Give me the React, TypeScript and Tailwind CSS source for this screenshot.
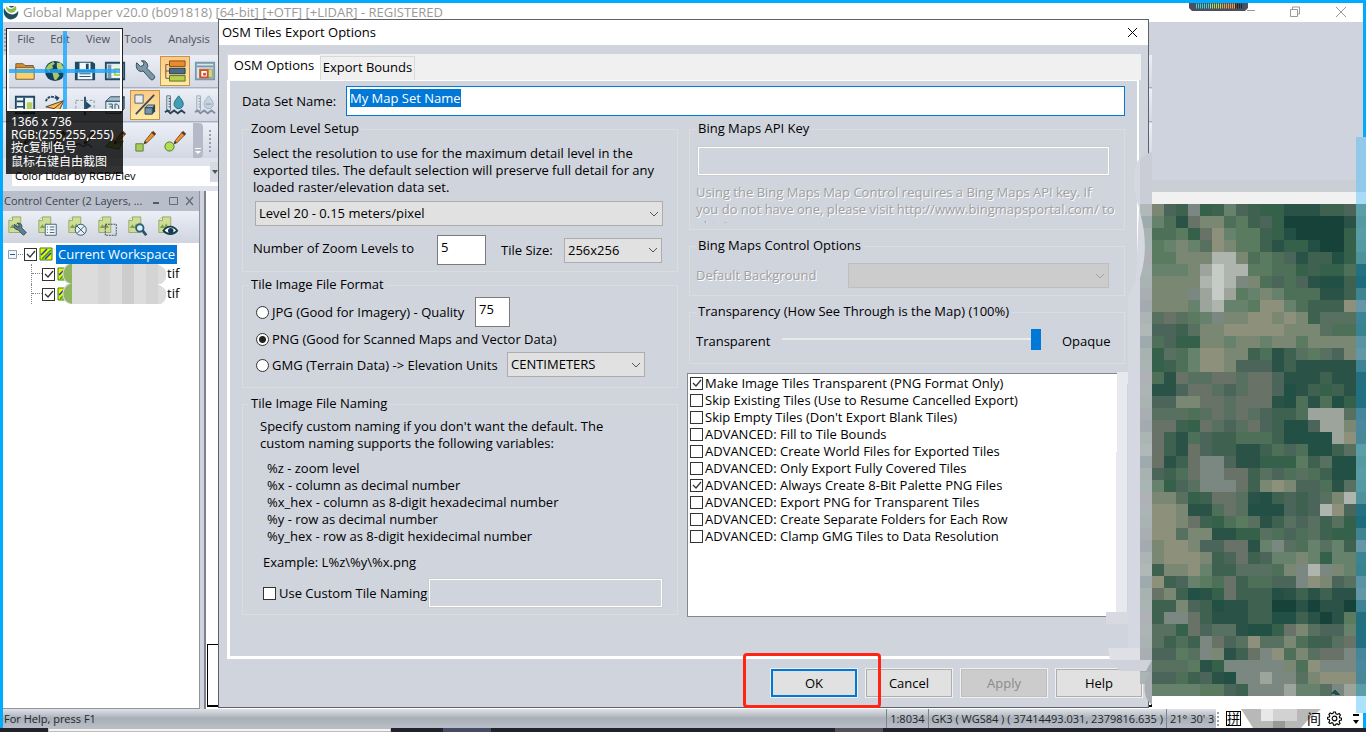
import { useEffect, useRef } from "react";
import type { ReactNode } from "react";

const NAVY = "#1f4a63";

/* ---------- Small drawings ---------- */

function Pencil() {
  return (
    <g>
      <path d="M12 12l8-10 3 3-9 9-3 1z" fill="#f0962e" stroke="#6b4a26" strokeWidth="1" />
      <path d="M19 3l2-2 3 3-2 2z" fill="#5a3b22" />
      <path d="M11 15l1-3 2 2z" fill="#3a3a3a" />
    </g>
  );
}

const toolIcons: Record<string, ReactNode> = {
  open: (
    <g>
      <path d="M2 4h8l2 2h9v5H2z" fill="#e8892b" stroke="#6b5a3a" />
      <path d="M2 8h20v13H2z" fill="#ffd06a" stroke="#6b5a3a" strokeWidth="1" />
    </g>
  ),
  globe: (
    <g>
      <circle cx="12" cy="12" r="11" fill="#12405e" />
      <path d="M5 5l5-3 2 2-3 2 1 3-4 1 1 3-2 0-3-4z" fill="#a8c860" />
      <path d="M14 3l4 0 4 6-1 5-3-3-2 1-2-4z" fill="#b8d070" />
      <path d="M9 13l6 1 2 3-4 5-2-1z" fill="#a8c860" />
    </g>
  ),
  save: (
    <g>
      <path d="M1 2h19l3 2v18H1z" fill={NAVY} />
      <path d="M6 3h12v8H6z" fill="#f4f6f9" />
      <path d="M13 4h3v6h-3z" fill={NAVY} />
      <path d="M4 13h16v8H4z" fill="#f4f6f9" />
      <path d="M6 15h12M6 18h12" stroke={NAVY} />
    </g>
  ),
  layout: (
    <g>
      <path d="M2 3h20v18H2z" fill="#e6edf3" stroke={NAVY} strokeWidth="2" />
      <path d="M4 5h4v15H4z" fill="#7d98aa" />
      <path d="M10 8h10v10H10z" fill="#b5cf5c" stroke="#fff" />
      <path d="M13 11h4v4h-4z" fill="#fff" />
    </g>
  ),
  wrench: (
    <path
      d="M3 3l4 4 3-1 1-3-3-2c4-1 7 2 7 6l-1 2 8 8c2 3-2 6-4 4l-8-9c-5 2-9-3-7-9z"
      fill="#7f96a6"
      stroke="#28445a"
      strokeWidth="1"
    />
  ),
  layers: (
    <g>
      <path d="M5 5H2v15h4M2 12h4" fill="none" stroke="#6b4a26" />
      <path d="M6 1h17v6H6z" fill="#ef8a2a" stroke="#7a4a1a" />
      <path d="M6 9h17v6H6z" fill="#4e6b85" stroke="#22384a" />
      <path d="M6 17h17v6H6z" fill="#b5cf4e" stroke="#5a6a20" />
    </g>
  ),
  view: (
    <g>
      <path d="M2 3h20v18H2z" fill="#d9e3ec" stroke="#7b98ab" strokeWidth="2" />
      <path d="M3 7h18" stroke="#7b98ab" strokeWidth="2" />
      <path d="M6 10h14v9H6z" fill="#cfd98a" stroke="#8fa050" />
      <path d="M7 11h8v8H7z" fill="#fff" stroke="#d05028" strokeWidth="2" />
      <path d="M10 14h3v3h-3z" fill="#d05028" />
    </g>
  ),
  panels: (
    <g>
      <path d="M2 3h20v18H2z" fill="#eef2f6" stroke={NAVY} strokeWidth="2" />
      <path d="M11 4v17M3 8h8M3 14h8" stroke={NAVY} strokeWidth="2" />
      <path d="M4 15h6v5H4z" fill="#fff" />
      <path d="M14 9h6v10h-6z" fill="#b5cf5c" />
    </g>
  ),
  fly: (
    <g>
      <path d="M2 8c2-6 8-6 12-3" fill="none" stroke={NAVY} strokeWidth="2" strokeDasharray="3 1" />
      <path d="M12 1l5 3-3 4z" fill={NAVY} />
      <path d="M2 14L22 7l-7 14-4-5z" fill="#f7b85a" stroke="#4a3a22" />
      <path d="M11 16L22 7" stroke="#4a3a22" />
    </g>
  ),
  flip: (
    <g>
      <path d="M2 7h20v12H2z" fill="none" stroke="#7b98ab" strokeDasharray="3 2" />
      <path d="M12 3v20" stroke={NAVY} strokeWidth="2" />
      <path d="M13 8l6 5-6 4z" fill={NAVY} />
    </g>
  ),
  cube: (
    <g>
      <path d="M2 8l5-5h15l-4 5z" fill="#a8b8c4" stroke={NAVY} />
      <path d="M18 8l4-5v13l-4 5z" fill="#5f7a8c" stroke={NAVY} />
      <path d="M2 8h16v13H2z" fill="#dfe7ed" stroke={NAVY} />
      <path d="M5 11h4v7H5M6 14h3M12 11v7h2l2-2v-3l-2-2z" fill="none" stroke={NAVY} />
    </g>
  ),
  shade: (
    <g>
      <path d="M1 1h9v9H1z" fill="#e8ecf0" stroke="#4a6070" />
      <path d="M22 1L2 22" stroke="#3b4d58" strokeWidth="2" />
      <path d="M12 15l3-3h8l-3 3z" fill="#a9bac5" stroke="#28445a" />
      <path d="M20 15l3-3v7l-3 3z" fill="#28445a" />
      <path d="M12 15h8v7h-8z" fill="#7894a6" stroke="#28445a" />
    </g>
  ),
  water: (
    <g>
      <path d="M3 2h4v16H3z" fill="#dfe7ed" stroke="#55707f" />
      <path d="M5 5h2M5 8h2M5 11h2M5 14h2" stroke="#28445a" />
      <path d="M16 2c3 4 5 6 5 9a5 5 0 0 1-10 0c0-3 2-5 5-9z" fill="#3f9fb5" stroke="#28647a" />
      <path d="M1 20l3-2 3 3 4-3 4 3 4-3 4 3" fill="none" stroke="#28445a" strokeWidth="2" />
    </g>
  ),
  waterOff: (
    <g opacity="0.5">
      <path d="M3 2h4v16H3z" fill="#dfe7ed" stroke="#55707f" />
      <path d="M5 5h2M5 8h2M5 11h2M5 14h2" stroke="#28445a" />
      <path d="M16 2c3 4 5 6 5 9a5 5 0 0 1-10 0c0-3 2-5 5-9z" fill="#a8c4d2" stroke="#55809a" />
      <path d="M13 11h6" stroke="#28445a" />
      <path d="M1 20l3-2 3 3 4-3 4 3 4-3 4 3" fill="none" stroke="#28445a" strokeWidth="2" />
    </g>
  ),
  drawPoint: (
    <g>
      <path d="M2 20l4-6 5 4" fill="none" stroke="#8fae4a" strokeWidth="2" />
      <Pencil />
    </g>
  ),
  drawLine: (
    <g>
      <path d="M2 17c4-6 6 4 10 0s6 2 8 2" fill="none" stroke="#6b8796" strokeWidth="2" />
      <Pencil />
    </g>
  ),
  drawArea: (
    <g>
      <path d="M2 18l7-8 4 4 8-2-5 9z" fill="#a5c45a" stroke="#5a7a2a" />
      <Pencil />
    </g>
  ),
  drawRect: (
    <g>
      <path d="M2 15h8v8H2z" fill="#a8cf55" stroke="#5a7a3a" />
      <Pencil />
    </g>
  ),
  drawCircle: (
    <g>
      <circle cx="6" cy="18" r="5" fill="#b2e04a" stroke="#4a6a3a" />
      <Pencil />
    </g>
  ),
};

function ToolButton({ icon, label, active = false }: { icon: string; label: string; active?: boolean }) {
  return (
    <button
      type="button"
      aria-label={label}
      className={
        active
          ? "flex h-[30px] w-[30px] shrink-0 items-center justify-center border border-[#c0954f] bg-gradient-to-b from-[#fbc985] to-[#ffeaa6]"
          : "flex h-[30px] w-[30px] shrink-0 items-center justify-center"
      }
    >
      <svg viewBox="0 0 24 24" className="h-[22px] w-[22px] shrink-0">
        {toolIcons[icon]}
      </svg>
    </button>
  );
}

const pageBadges: Record<string, ReactNode> = {
  wrench: <path d="M8 9l3 3h2V9l-2-1c4-1 6 2 5 5l5 5-3 3-6-6c-3 0-5-2-4-6z" fill="#5f8093" stroke="#28445a" strokeWidth="1" />,
  list: (
    <g>
      <path d="M9 9h12v12H9z" fill="#f4f7fa" stroke="#3b5f78" />
      <path d="M11 12h1M14 12h5M11 15h1M14 15h5M11 18h1M14 18h5" stroke="#3b5f78" />
    </g>
  ),
  remove: (
    <g>
      <circle cx="15" cy="15" r="6" fill="#e9eff4" stroke="#28506a" />
      <path d="M11 11l8 8M19 11l-8 8" stroke="#28506a" strokeWidth="1" />
    </g>
  ),
  select: <path d="M9 9h12v12H9z" fill="none" stroke="#28445a" strokeWidth="1" strokeDasharray="2 1" />,
  zoom: (
    <g>
      <circle cx="14" cy="13" r="4" fill="#e3edf4" stroke="#28607c" strokeWidth="2" />
      <path d="M17 16l4 5" stroke="#28506a" strokeWidth="3" />
    </g>
  ),
  eye: (
    <g>
      <path d="M7 16c4-6 11-6 15 0-4 5-11 5-15 0z" fill="#fff" stroke="#123c54" strokeWidth="2" />
      <circle cx="15" cy="16" r="3" fill="#123c54" />
    </g>
  ),
};

function PageButton({ badge, label }: { badge: string; label: string }) {
  return (
    <button type="button" aria-label={label} className="flex h-[30px] w-[30px] items-center justify-center">
      <svg viewBox="0 0 24 24" className="h-[22px] w-[22px]">
        <path d="M6 1h9v17H2V5z" fill="#d0dd96" stroke="#93a866" />
        <path d="M2 5h4V1" fill="#eef3d4" stroke="#93a866" />
        <path d="M3 13l3-4 2 3 2-4 3 5z" fill="#7f9e52" />
        {pageBadges[badge]}
      </svg>
    </button>
  );
}

/* ---------- Satellite mosaic ---------- */

const tones: Record<string, string> = {
  a: "#2b5246", b: "#3f6150", c: "#4f7058", d: "#66816c", e: "#7a8772", f: "#8d907b",
  g: "#aeb5ae", h: "#16423a", i: "#225045", j: "#57705f", k: "#687266", l: "#4b655a",
  m: "#5b7b60", n: "#7b8882", o: "#c6cbc8", p: "#35604a", q: "#9ca49b",
};

const mosaic = [
  "elbnpbdlbppaaabbl", "dcakeecmblphhhhha", "ccmpkfdmmbpihhhhp", "mdedjfemmbappihhp",
  "mmeeeggecmclabbip", "dddeqoggmmccpbppc", "eeeegogneclclaiib", "eeenqoqmdedcccaab",
  "eeedqgddmffdcbbbf", "jkjmdneeffefebjjj", "llbjeefffffeeejcc", "clppeedeedeemeeee",
  "pjcdffeebcabjmjle", "pbcdffelllabaaaaa", "cakjjkkjkklaaabaa", "aalkkjljkkliabpba",
  "lleekkjkkkaicacip", "jjjcjkjkjlbbcqqqj", "kkbpkjljklbiilqqe", "kbaclbbcccbiiiiqf",
  "kbaklbbaabclciibj", "kabknnlaapppmbjii", "lbcknnkkbjlcjcbii", "dpljnnnkbefellcaj",
  "eejpbkkjaiblbljeg", "ffeaackjiiilblgfl", "ffekbpcmjabjljbjp", "ffjeeaappjclcjbpp",
  "effellkkadnjcdjdb", "efffeblkblddedpdd", "beefdbbjjjcengned", "fbldmckbccllnfelj",
  "kebiapkbbbiababaa", "bbelbiaabbhhahaah", "bnnkbaaabbiibaham", "jjpkljjaiipkejlld",
  "jbcbnkljfjjecbbjk", "llmjneabknfcejkkn", "jjjmapnnnnnecfnnn", "llcblainnqnnjefff",
  "ddddmmlbnnnqddjnq",
];

const edgeTones = [
  "#5a9fa8", "#5799a0", "#5a9ca6", "#559aa2", "#4e929a", "#246f80", "#1d6c7c", "#408391", "#6597a8", "#3c8493",
  "#3b8290", "#5a94a4", "#6397a8", "#3f8294", "#236f80", "#21707f", "#246e82", "#44869a", "#4b88a0", "#4a8799",
];

function Mosaic() {
  return (
    <svg viewBox="0 0 204 492" className="h-[492px] w-[204px] shrink-0" shapeRendering="crispEdges">
      {mosaic.map((row, y) =>
        row.split("").map((tone, x) => (
          <rect key={`${x}-${y}`} x={x * 12} y={y * 12} width="12" height="12" fill={tones[tone]} />
        )),
      )}
      <path d="M178 490l5-5 5 6z" fill="#1d5046" />
    </svg>
  );
}

/* ---------- Dialog parts ---------- */

function Chevron({ muted = false }: { muted?: boolean }) {
  return (
    <svg viewBox="0 0 10 6" className="pointer-events-none absolute top-1/2 right-1 h-[6px] w-[10px] -translate-y-1/2">
      <path d="M1 1l4 4 4-4" fill="none" stroke={muted ? "#a0a0a0" : "#555"} strokeWidth="1" />
    </svg>
  );
}

function Combo({ id, label, value, className, disabled = false }: {
  id: string; label?: string; value: string; className: string; disabled?: boolean;
}) {
  return (
    <div className={`relative h-[25px] ${className}`}>
      <select
        id={id}
        aria-label={label}
        disabled={disabled}
        className="h-full w-full appearance-none border border-[#adadad] bg-[#e1e1e1] px-[3px] text-black disabled:border-[#bfbfbf] disabled:bg-[#cccccc]"
      >
        <option>{value}</option>
      </select>
      <Chevron muted={disabled} />
    </div>
  );
}

function Check({ id, checked = false }: { id: string; checked?: boolean }) {
  return (
    <span className="relative h-[13px] w-[13px] shrink-0">
      <input
        id={id}
        type="checkbox"
        defaultChecked={checked}
        className="peer block h-[13px] w-[13px] appearance-none border border-[#333] bg-white"
      />
      <svg viewBox="0 0 13 13" className="pointer-events-none absolute inset-0 hidden h-[13px] w-[13px] peer-checked:block">
        <path d="M3 6l3 3 5-6" fill="none" stroke="#333" strokeWidth="1.3" />
      </svg>
    </span>
  );
}

function Radio({ id, checked = false }: { id: string; checked?: boolean }) {
  return (
    <input
      id={id}
      type="radio"
      name="format"
      defaultChecked={checked}
      className="h-[13px] w-[13px] shrink-0 appearance-none rounded-full border border-[#333] bg-white checked:bg-[radial-gradient(#222_0_3px,#fff_4px)]"
    />
  );
}

function Group({ title, className, children }: { title: string; className: string; children: ReactNode }) {
  return (
    <fieldset className={`min-w-0 border border-[#dcdcdc] ${className}`}>
      <legend className="ml-[6px] h-4 px-[2px] leading-[14px]">{title}</legend>
      {children}
    </fieldset>
  );
}

const exportOptions: [string, boolean][] = [
  ["Make Image Tiles Transparent (PNG Format Only)", true],
  ["Skip Existing Tiles (Use to Resume Cancelled Export)", false],
  ["Skip Empty Tiles (Don't Export Blank Tiles)", false],
  ["ADVANCED: Fill to Tile Bounds", false],
  ["ADVANCED: Create World Files for Exported Tiles", false],
  ["ADVANCED: Only Export Fully Covered Tiles", false],
  ["ADVANCED: Always Create 8-Bit Palette PNG Files", true],
  ["ADVANCED: Export PNG for Transparent Tiles", false],
  ["ADVANCED: Create Separate Folders for Each Row", false],
  ["ADVANCED: Clamp GMG Tiles to Data Resolution", false],
];

function ExportDialog() {
  const nameRef = useRef<HTMLInputElement>(null);
  useEffect(() => {
    nameRef.current?.focus();
    nameRef.current?.select();
  }, []);

  return (
    <section
      role="dialog"
      aria-label="OSM Tiles Export Options"
      className="absolute top-[19px] right-[217px] bottom-6 left-[218px] flex flex-col border border-[#606068] bg-[#d0d4dd] text-[13px] leading-[17px] text-black"
    >
      <header className="flex h-[25px] shrink-0 items-center justify-between bg-white pr-[10px] pl-[3px]">
        <h1>OSM Tiles Export Options</h1>
        <button type="button" aria-label="Close">
          <svg viewBox="0 0 11 11" className="h-[11px] w-[11px]">
            <path d="M1 1l9 9M10 1l-9 9" stroke="#000" strokeWidth="1" />
          </svg>
        </button>
      </header>

      <div className="mt-[9px] mr-[7px] ml-2 flex h-[26px] shrink-0 items-end bg-[#f0f0f0]">
        <button type="button" className="h-[26px] w-[93px] border-t border-l border-[#dcdcdc] bg-white pb-1">
          OSM Options
        </button>
        <button type="button" className="h-6 w-[95px] border border-b-0 border-[#d9d9d9] bg-[#f0f0f0] pb-[2px]">
          Export Bounds
        </button>
      </div>

      <div className="mr-[9px] ml-2 flex min-h-0 flex-1 flex-col border-t border-r-2 border-b-3 border-l-3 border-white px-3 pt-[5px]">
        <div className="flex items-center">
          <label htmlFor="dataset" className="w-[104px] shrink-0">Data Set Name:</label>
          <input
            ref={nameRef}
            id="dataset"
            defaultValue="My Map Set Name"
            className="h-[30px] min-w-0 flex-1 border border-[#0078d7] bg-white px-[3px] pb-[6px] outline-none selection:bg-[#0078d7] selection:text-white"
          />
        </div>

        <div className="mt-[5px] grid grid-cols-2 gap-[11px]">
          <div className="flex min-w-0 flex-col">
            <Group title="Zoom Level Setup" className="h-[151px]">
              <p className="mt-2 pl-[10px]">
                Select the resolution to use for the maximum detail level in the<br />
                exported tiles. The default selection will preserve full detail for any<br />
                loaded raster/elevation data set.
              </p>
              <Combo id="level" label="Zoom level" value="Level 20 - 0.15 meters/pixel" className="mt-[5px] mr-[14px] ml-3" />
              <div className="mt-[9px] mr-[15px] ml-[10px] flex items-center">
                <label htmlFor="levels" className="w-[184px] pb-1">Number of Zoom Levels to</label>
                <input id="levels" defaultValue="5" className="h-[30px] w-[49px] border border-[#7a7a7a] bg-white px-[3px] pb-[6px]" />
                <label htmlFor="size" className="ml-[15px]">Tile Size:</label>
                <Combo id="size" value="256x256" className="ml-auto w-[98px]" />
              </div>
            </Group>

            <Group title="Tile Image File Format" className="mt-[5px] h-[111px]">
              <div className="mt-1 ml-[13px] flex h-[30px] items-center gap-[3px]">
                <Radio id="jpg" />
                <label htmlFor="jpg" className="w-[200px]">JPG (Good for Imagery) - Quality</label>
                <input aria-label="JPG quality" defaultValue="75" className="h-[30px] w-[35px] border border-[#7a7a7a] bg-white px-[3px] pb-[6px]" />
              </div>
              <div className="ml-[13px] flex h-[25px] items-center gap-[3px]">
                <Radio id="png" checked />
                <label htmlFor="png">PNG (Good for Scanned Maps and Vector Data)</label>
              </div>
              <div className="ml-[13px] flex h-[25px] items-end gap-[3px]">
                <div className="flex h-[23px] items-center gap-[3px]">
                  <Radio id="gmg" />
                  <label htmlFor="gmg" className="w-[232px] whitespace-nowrap">
                    GMG (Terrain Data) -&gt; Elevation Units
                  </label>
                </div>
                <Combo id="units" label="Elevation units" value="CENTIMETERS" className="w-[138px]" />
              </div>
            </Group>

            <Group title="Tile Image File Naming" className="mt-2 h-[219px]">
              <p className="mt-[6px] pl-[17px]">
                Specify custom naming if you don't want the default. The<br />
                custom naming supports the following variables:
              </p>
              <ul className="mt-2 pl-6">
                <li>%z - zoom level</li>
                <li>%x - column as decimal number</li>
                <li>%x_hex - column as 8-digit hexadecimal number</li>
                <li>%y - row as decimal number</li>
                <li>%y_hex - row as 8-digit hexidecimal number</li>
              </ul>
              <p className="mt-[9px] pl-5">Example: L%z\%y\%x.png</p>
              <div className="mt-2 mr-[15px] ml-5 flex items-center gap-[3px]">
                <Check id="custom" />
                <label htmlFor="custom" className="w-[147px] whitespace-nowrap">Use Custom Tile Naming</label>
                <input aria-label="Custom tile naming" disabled className="h-7 min-w-0 flex-1 border border-white outline outline-[#cccccc]" />
              </div>
            </Group>
          </div>

          <div className="flex min-w-0 flex-col">
            <Group title="Bing Maps API Key" className="h-[109px]">
              <div className="mt-[10px] mr-[15px] ml-2 flex">
                <input aria-label="Bing Maps API Key" disabled className="h-7 min-w-0 flex-1 border border-white outline outline-[#cccccc]" />
              </div>
              <p className="mt-[9px] ml-[6px] h-[39px] overflow-hidden whitespace-nowrap text-[#a0a0a0] text-shadow-[1px_1px_0_#fff]">
                Using the Bing Maps Map Control requires a Bing Maps API key. If<br />
                you do not have one, please visit http://www.bingmapsportal.com/ to<br />
                obtain one.
              </p>
            </Group>

            <Group title="Bing Maps Control Options" className="mt-2 h-[58px]">
              <div className="mt-[9px] mr-[15px] ml-[6px] flex items-center justify-between">
                <label htmlFor="background" className="text-[#a0a0a0] text-shadow-[1px_1px_0_#fff]">Default Background</label>
                <Combo id="background" value="" disabled className="w-[261px]" />
              </div>
            </Group>

            <Group title="Transparency (How See Through is the Map) (100%)" className="mt-2 h-[60px]">
              <div className="mt-2 mr-[14px] ml-[6px] flex items-start">
                <label htmlFor="opacity" className="mt-[5px] w-[86px] shrink-0">Transparent</label>
                <input
                  id="opacity"
                  type="range"
                  defaultValue={100}
                  className="h-[21px] min-w-0 flex-1 appearance-none bg-transparent [&::-webkit-slider-runnable-track]:h-[2px] [&::-webkit-slider-runnable-track]:bg-[#e7eaea] [&::-webkit-slider-thumb]:mt-[-9px] [&::-webkit-slider-thumb]:h-[21px] [&::-webkit-slider-thumb]:w-[10px] [&::-webkit-slider-thumb]:appearance-none [&::-webkit-slider-thumb]:bg-[#0078d7]"
                />
                <span className="mt-[5px] ml-[21px] w-12">Opaque</span>
              </div>
            </Group>

            <ul className="mt-[9px] mr-[7px] -ml-[2px] h-[244px] border border-r-0 border-[#828790] bg-white pt-[1px] pl-[2px]">
              {exportOptions.map(([name, on], i) => (
                <li key={name} className="flex h-[17px] items-center gap-[2px]">
                  <Check id={`option-${i}`} checked={on} />
                  <label htmlFor={`option-${i}`}>{name}</label>
                </li>
              ))}
            </ul>
          </div>
        </div>
      </div>

      <footer className="flex h-12 shrink-0 items-start justify-end gap-[7px] pt-[9px] pr-[5px]">
        <div className="relative">
          <button type="button" className="h-[30px] w-[88px] border border-[#f0f0f0] bg-[#e1e1e1] inset-ring-2 inset-ring-[#0078d7]">OK</button>
          <div className="pointer-events-none absolute -top-[15px] -right-[23px] -bottom-[10px] -left-[27px] rounded-[4px] border-3 border-[#ff2414]" />
        </div>
        <button type="button" className="h-[30px] w-[88px] border border-[#f0f0f0] bg-[#e1e1e1] inset-ring inset-ring-[#adadad]">Cancel</button>
        <button type="button" disabled className="h-[30px] w-[88px] border border-[#f0f0f0] bg-[#cccccc] text-[#8a8a8a] inset-ring inset-ring-[#bfbfbf]">Apply</button>
        <button type="button" className="h-[30px] w-[88px] border border-[#f0f0f0] bg-[#e1e1e1] inset-ring inset-ring-[#adadad]">Help</button>
      </footer>
    </section>
  );
}

/* Smudged strip laid over the dialog's right edge */
function Smudge() {
  const bands = ["#b0b8b8", "#a9b5b3", "#a8b3b2", "#abb5b4", "#a7b2b1", "#acb4b6", "#a3abb0", "#9eabae", "#b0b1b6", "#a8aeb2"];
  return (
    <svg viewBox="0 0 60 560" className="pointer-events-none absolute top-[150px] right-[214px] h-[560px] w-[60px]">
      <path d="M60 2c-14 4-20 16-18 30l6 20v10h12z" fill="#cacdd6" />
      <g shapeRendering="crispEdges">
        {Array.from({ length: 40 }, (_, i) => (
          <rect key={i} x="48" y={54 + i * 12} width="12" height="12" fill={bands[(i * 7) % 10]} />
        ))}
      </g>
      <path d="M48 8c-8 8-8 30-1 50l-3 70-8 20v360h12V128c6-20 7-40 0-66z" fill="#d5d8e1" />
      <path d="M25 222h11v12h-1v228H24v-160h1z" fill="#e8e9ee" />
      <path d="M14 462h22v12H14z" fill="#d9dae1" />
      <path d="M16 498h32v12H18z" fill="#dee0e6" />
      <path d="M18 510h42l-6 11H28z" fill="#cfd2da" />
      <path d="M60 521c-8 6-10 20-4 30l4 4z" fill="#a8aeb2" />
    </svg>
  );
}

/* ---------- Main window ---------- */

const dots = "bg-[radial-gradient(#9aa0ae_1px,transparent_1px)] bg-[length:4px_4px]";

function ToolArea() {
  return (
    <div className="flex h-[169px] flex-col bg-[#cfd3dd]">
      <nav className="flex h-[33px] items-center pt-[2px] text-[11px] text-[#4d5260]">
        <div className={`mr-[2px] h-6 w-1 ${dots}`} />
        <button type="button" className="w-[34px]">File</button>
        <button type="button" className="w-[34px]">Edit</button>
        <button type="button" className="ml-[2px] w-[38px]">View</button>
        <button type="button" className="ml-[2px] w-[38px]">Tools</button>
        <button type="button" className="ml-[2px] w-[60px]">Analysis</button>
      </nav>
      <div className="flex h-[33px] items-center border-b border-[#aab0bd] bg-gradient-to-b from-[#eceff6] to-[#d3d8e4] pl-[7px]">
        <ToolButton icon="open" label="Open" />
        <ToolButton icon="globe" label="Online data" />
        <ToolButton icon="save" label="Save" />
        <ToolButton icon="layout" label="Map layout" />
        <ToolButton icon="wrench" label="Configure" />
        <ToolButton icon="layers" label="Control center" active />
        <ToolButton icon="view" label="Overview" />
      </div>
      <div className="mt-px flex h-[33px] items-center border-b border-[#aab0bd] bg-gradient-to-b from-[#eceff6] to-[#d3d8e4] pl-[7px]">
        <ToolButton icon="panels" label="Panels" />
        <ToolButton icon="fly" label="Fly to" />
        <ToolButton icon="flip" label="Flip" />
        <ToolButton icon="cube" label="3D view" />
        <ToolButton icon="shade" label="Shading" active />
        <ToolButton icon="water" label="Water level" />
        <ToolButton icon="waterOff" label="Lower water" />
      </div>
      <div className="mt-px flex h-[35px] items-center bg-gradient-to-b from-[#eceff6] to-[#d3d8e4] pl-[7px]">
        <ToolButton icon="drawPoint" label="Draw point" />
        <ToolButton icon="drawLine" label="Draw line" />
        <ToolButton icon="drawLine" label="Draw path" />
        <ToolButton icon="drawArea" label="Draw area" />
        <ToolButton icon="drawRect" label="Draw rectangle" />
        <ToolButton icon="drawCircle" label="Draw circle" />
        <div className="ml-[3px] flex h-full w-[10px] items-end justify-center rounded-r bg-[#b4bac7] pb-1">
          <svg viewBox="0 0 6 6" className="h-[6px] w-[6px]"><path d="M0 0h6v1H0zM0 3h6L3 6z" fill="#fff" /></svg>
        </div>
        <div className={`ml-[5px] h-6 w-1 ${dots}`} />
      </div>
      <div className="flex flex-1 items-center bg-[#dfe3ec] pb-[6px] pl-[9px]">
        <div className="relative h-5 w-[206px]">
          <select aria-label="Lidar color mode" className="h-full w-full appearance-none bg-white pl-[3px] text-[11px] text-black">
            <option>Color Lidar by RGB/Elev</option>
          </select>
          <div className="pointer-events-none absolute inset-y-0 right-0 flex w-[8px] items-center bg-[#d6dae4]">
            <svg viewBox="0 0 8 4" className="h-1 w-2"><path d="M2 0h6L5 4z" fill="#555" /></svg>
          </div>
        </div>
      </div>
    </div>
  );
}

function LayerIcon() {
  return (
    <svg viewBox="0 0 14 14" className="h-[14px] w-[14px] shrink-0">
      <path d="M1 1h12v12H1z" fill="#f5f000" stroke="#2a8a1a" strokeWidth="1" />
      <path d="M2 8l6-6M6 12l6-6" stroke="#1a3ad0" strokeWidth="1.5" />
      <path d="M3 12l9-9" stroke="#20a030" strokeWidth="1.5" />
    </svg>
  );
}

function TreeRow({ id, tail }: { id: string; tail: string }) {
  return (
    <li className="flex h-5 items-center">
      <span className="ml-[28px] h-5 w-[11px] border-l border-dotted border-[#888]">
        <span className="block h-[10px] border-b border-dotted border-[#888]" />
      </span>
      <Check id={id} checked />
      <span className="ml-[2px]"><LayerIcon /></span>
      <svg viewBox="0 0 104 20" className="-ml-[9px] h-5 w-[104px] shrink-0">
        <path d="M5 0h90c12 4 12 15 4 20H8C-2 18-1 4 5 0z" fill="#dcdcdc" />
        <path d="M10 0v20C-1 18-1 4 8 0z" fill="#8fb560" />
        <path d="M36 0h12v20H36z" fill="#d5d5d5" />
        <path d="M60 0h12v20H60z" fill="#cdcdcd" />
        <path d="M84 0h12v20H84z" fill="#d4d4d4" />
      </svg>
      <label htmlFor={id} className="ml-[1px]">{tail}</label>
    </li>
  );
}

function ControlCenter() {
  return (
    <aside className="flex w-[197px] shrink-0 flex-col border-r border-b border-[#8f949e] bg-white">
      <header className="flex h-5 shrink-0 items-center bg-[#b9bfca] pr-[5px] pl-[1px] text-[11px] text-[#3e434f]">
        <h2 className="flex-1 whitespace-nowrap">Control Center (2 Layers, ...</h2>
        <svg viewBox="0 0 42 10" className="h-[10px] w-[42px]">
          <path d="M1 7h6" stroke="#555b66" strokeWidth="2" />
          <path d="M17.5 1.5h8v7h-8z" fill="none" stroke="#666c77" />
          <path d="M34 1l7 8M41 1l-7 8" stroke="#666c77" strokeWidth="1.3" />
        </svg>
      </header>
      <div className="flex h-8 shrink-0 items-center bg-gradient-to-b from-[#eceff6] to-[#cfd4df]">
        <PageButton badge="wrench" label="Options" />
        <PageButton badge="list" label="Metadata" />
        <PageButton badge="remove" label="Close layer" />
        <PageButton badge="select" label="Select" />
        <PageButton badge="zoom" label="Zoom to" />
        <PageButton badge="eye" label="Show" />
      </div>
      <ul className="flex-1 pt-px text-[13px]">
        <li className="flex h-5 items-center">
          <svg viewBox="0 0 16 9" className="ml-[5px] h-[9px] w-4">
            <path d="M.5.5h8v8h-8z" fill="#f2f6fa" stroke="#8fa0b0" />
            <path d="M2 4.5h5" stroke="#3050a0" />
            <path d="M10 4.5h6" stroke="#888" strokeDasharray="1 1" />
          </svg>
          <Check id="workspace" checked />
          <span className="mr-[3px] ml-[2px]"><LayerIcon /></span>
          <label htmlFor="workspace" className="h-[19px] bg-[#0078d7] px-[2px] leading-[19px] text-white">Current Workspace</label>
        </li>
        <TreeRow id="layer-1" tail="tif" />
        <TreeRow id="layer-2" tail="tif" />
      </ul>
    </aside>
  );
}

function Magnifier() {
  return (
    <div className="pointer-events-none absolute top-7 left-[6px] w-[117px] font-['Noto_Sans','Noto_Sans_CJK_SC',sans-serif] text-white">
      <div className="relative h-[84px] border border-[#222] inset-ring-2 inset-ring-white">
        <div className="absolute top-10 right-[2px] left-[2px] h-1 bg-[#1aa8ff]/80" />
        <div className="absolute top-[2px] bottom-[2px] left-14 w-1 bg-[#1aa8ff]/80" />
      </div>
      <div className="h-[62px] bg-black/80 pt-[3px] pl-[5px] text-[12px] leading-[13px] whitespace-nowrap">
        <p>1366 x 736</p>
        <p>RGB:(255,255,255)</p>
        <p className="leading-[14px]">按c复制色号</p>
        <p className="leading-[14px]">鼠标右键自由截图</p>
      </div>
    </div>
  );
}

export default function App() {
  return (
    <main className="relative flex h-screen min-h-[732px] flex-col overflow-hidden bg-[#cfd3dd] font-['Open_Sans','Noto_Sans_CJK_SC',sans-serif] text-black">
      <div className="flex min-h-0 flex-1 flex-col border-x-3 border-t-3 border-[#00aaff]">
        <header className="flex h-[19px] shrink-0 items-center bg-white text-[13px] text-[#999]">
          <svg viewBox="0 0 16 16" className="h-4 w-4 shrink-0">
            <path d="M1 3C-1 11 5 16 10 14c4-1 6-5 5-8-3 5-10 5-14-3z" fill="#1f4f5f" />
            <path d="M3 1c0 6 5 8 8 6s3-5 1-6C10 5 6 5 3 1z" fill="#8fb84a" />
            <path d="M6 1c1 2 4 2 5 0z" fill="#1f4f5f" />
          </svg>
          <span className="ml-1 flex-1">Global Mapper v20.0 (b091818) [64-bit] [+OTF] [+LIDAR] - REGISTERED</span>
          <svg viewBox="0 0 66 12" className="mr-[13px] mb-px h-3 w-[66px] shrink-0">
            <path d="M6.5 3.5h7v7h-7zM8.5 3v-2h7v7h-2" fill="none" stroke="#999" />
            <path d="M52 1l10 10M62 1L52 11" stroke="#999" />
          </svg>
        </header>

        <div className="flex min-h-0 flex-1">
          <div className="flex min-w-0 flex-1 flex-col">
            <ToolArea />
            <div className="flex min-h-0 flex-1">
              <ControlCenter />
              <div className="ml-[4px] flex flex-1 flex-col justify-end border-l-2 border-[#7d828c] bg-white pb-[2px] pl-[1px]">
                <div className="h-[63px] border border-b-2 border-black" />
              </div>
            </div>
          </div>
          <div className="flex w-[211px] shrink-0 flex-col">
            <div className="h-[158px] bg-[#cfd3dd]" />
            <div className="h-3 bg-[#ccced6]" />
            <div className="h-3 bg-[#f1f1f1]" />
            <Mosaic />
            <div className="flex-1 bg-white" />
          </div>
        </div>

        <footer className="flex h-[19px] shrink-0 items-center bg-gradient-to-b from-[#dfe3e8] via-[#a9afb7] to-[#b9bec8] text-[11px] text-[#22252b]">
          <span className="flex-1 pt-[2px] pl-[1px]">For Help, press F1</span>
          <span className="border-l border-[#7d828c] px-[3px] pt-[2px]">1:8034</span>
          <span className="border-l border-[#7d828c] px-[3px] pt-[2px]">GK3 ( WGS84 ) ( 37414493.031, 2379816.635 )</span>
          <span className="w-[50px] border-l border-[#7d828c] pt-[2px] pl-[3px] whitespace-nowrap">21° 30' 3</span>
          <div className="flex h-[19px] w-[147px] items-center bg-white text-black">
            <div className={`h-4 w-1 ${dots}`} />
            <span className="ml-[6px] h-[15px] w-[15px] shrink-0 border border-black text-center text-[13px] leading-[13px]">拼</span>
            <svg viewBox="0 0 80 19" className="h-[19px] w-20 shrink-0">
              <path d="M0 0h80l-14 12-6 7H12z" fill="#b8b8b8" />
              <path d="M20 0h12v12H20z" fill="#e8e8e8" />
              <path d="M32 0h24v12H32z" fill="#d2d2d2" />
              <path d="M32 12h12v7H32z" fill="#999" />
            </svg>
            <span className="-ml-[14px] text-[14px]">间</span>
            <svg viewBox="0 0 16 16" className="ml-[6px] h-[15px] w-[15px] shrink-0" fill="none" stroke="#000" strokeWidth="1.2">
              <path d="M7 1h2l.5 2 1.5.7 2-1 1.3 1.6-1.2 1.7.4 1.2 2 .6v1.8l-2 .6-.6 1.2 1 1.9-1.5 1.3-1.7-1-1.2.5L9 15H7l-.6-2-1.3-.5-1.8 1-1.4-1.4 1-1.8-.5-1.3-2-.5V7l2-.5.6-1.2-1-1.8L3.400 2l1.7 1 1.4-.5z" />
              <circle cx="8" cy="8" r="2.5" />
            </svg>
            <svg viewBox="0 0 8 12" className="ml-[10px] h-3 w-2 shrink-0"><path d="M1 1h6v2H1zM1 7h6l-3 4z" fill="#000" /></svg>
          </div>
        </footer>
      </div>

      <div className="flex h-1 shrink-0 bg-[#20222c]">
        <div className="ml-12 w-[343px] border border-[#bbb] bg-[#f4f4f4]" />
        <div className="ml-[52px] w-12 bg-[#454c63]" />
        <div className="ml-[344px] w-12 bg-[#505058]" />
      </div>

      <div className="absolute top-[137px] right-0 h-[55px] w-[10px] bg-[#92c8ea]" />
      <div className="absolute top-[192px] right-0 h-3 w-[10px] bg-[#a8dcf6]" />
      <div className="absolute top-[204px] right-0 flex w-[10px] flex-col">
        {mosaic.map((row, y) => (
          <div key={`${row}-${y}`} className="h-3" style={{ backgroundColor: edgeTones[y % edgeTones.length] }} />
        ))}
      </div>
      <div className="absolute right-0 bottom-[19px] h-[17px] w-[10px] bg-[#ade2ff]" />

      <svg viewBox="0 0 66 8" className="absolute top-[3px] right-[111px] h-2 w-[66px]">
        <path d="M0 0h59v5l-3 3H3L0 5z" fill="#4a505f" />
        <path d="M7 3h14" stroke="#3fd0d0" strokeWidth="5" strokeDasharray="1 1" />
        <path d="M21 3h12" stroke="#b8dc50" strokeWidth="5" strokeDasharray="1 1" />
        <path d="M33 3h13" stroke="#f5a03c" strokeWidth="5" strokeDasharray="1 1" />
        <path d="M46 3h7" stroke="#20242c" strokeWidth="5" strokeDasharray="1 1" />
        <path d="M58 7.5h8" stroke="#999" />
      </svg>

      <ExportDialog />
      <Smudge />
      <Magnifier />
    </main>
  );
}
